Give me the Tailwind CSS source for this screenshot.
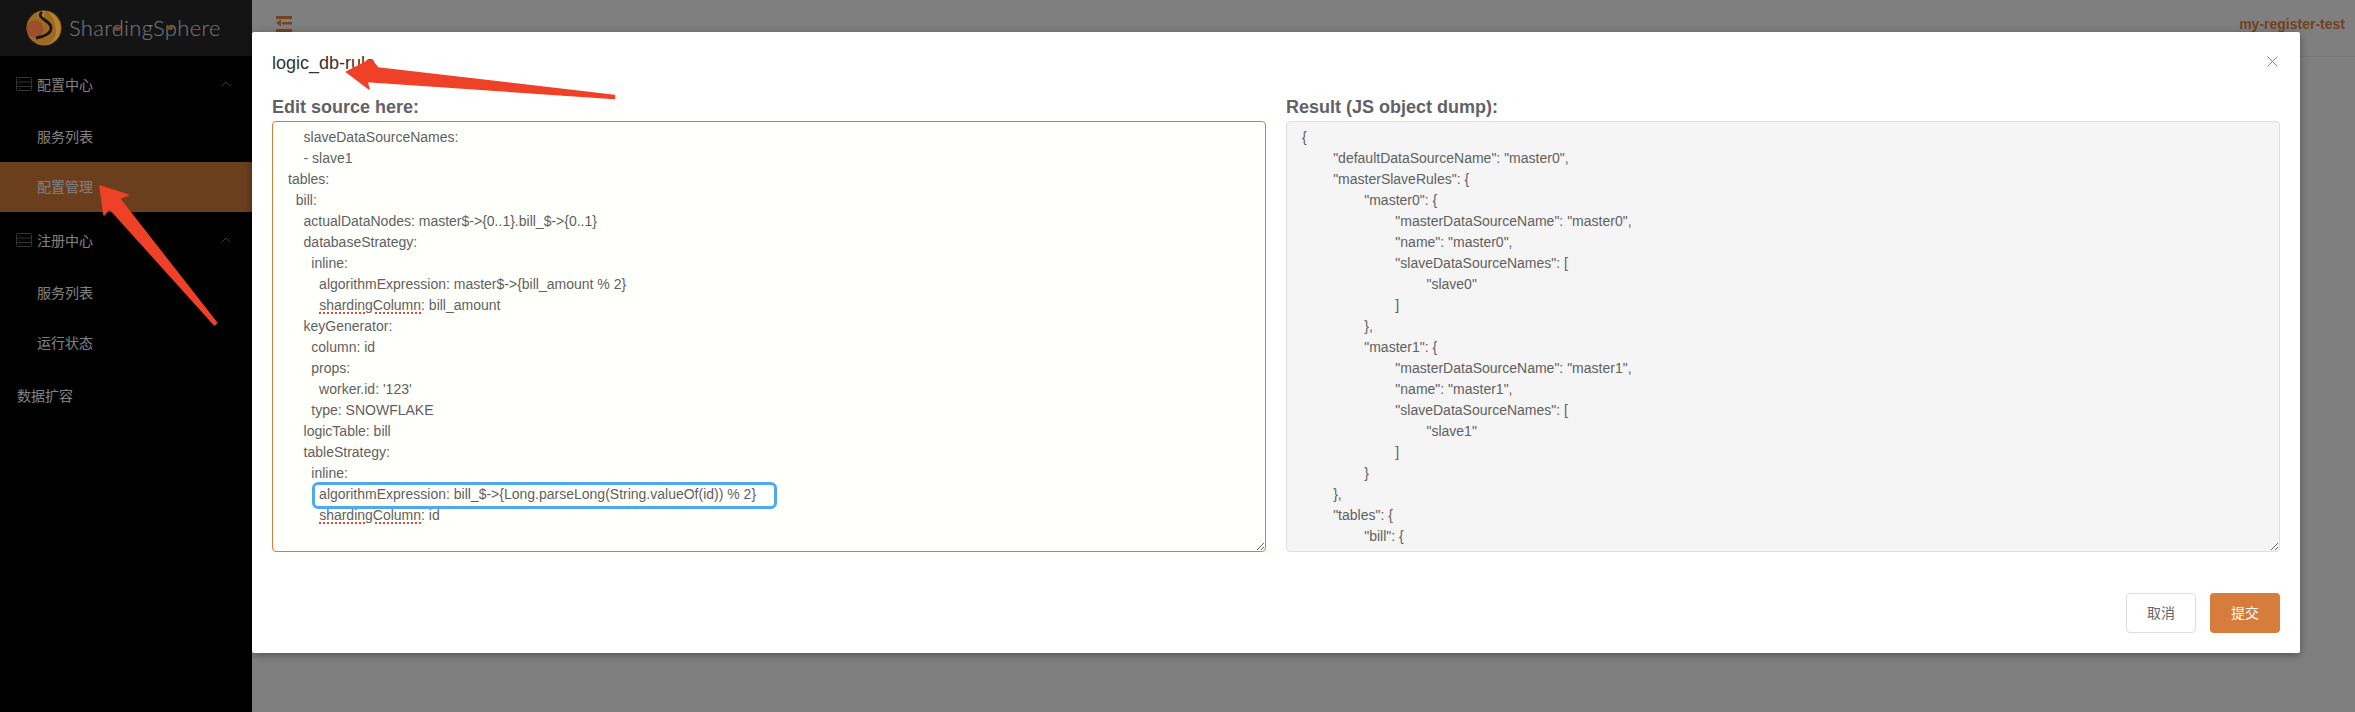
<!DOCTYPE html>
<html lang="en">
<head>
  <meta charset="UTF-8" />
  <title>ShardingSphere</title>
  <script src="https://cdn.jsdelivr.net/npm/@tailwindcss/browser@4"></script>
</head>
<body class="font-['Liberation_Sans','Noto_Sans_CJK_SC',sans-serif] text-sm">
  <div class="relative w-[2355px] h-[712px] overflow-hidden bg-white flex">
    <!-- sidebar -->
    <aside class="w-[252px] shrink-0 bg-black text-white">
      <div class="h-14 bg-[#282828] flex items-center pl-[26px] gap-[7px]">
        <svg class="relative z-20 w-9 h-9" viewBox="0 0 36 36">
          <circle cx="18" cy="18" r="17.500" fill="#9a6a26"/>
          <path d="M22 1c9 4 13 12 12 20-1 7-7 13-14 14 7-3 11-9 10-16-1-7-4-13-8-18z" fill="#b5842c"/>
          <path d="M14 1C8 6 13 9 20 11c-2-3-3-6-1-10z" fill="#b5842c"/>
          <circle cx="9" cy="19" r="8.500" fill="#9c4f2d"/>
          <path d="M16 2C9 8 24 10 25 17c1 6-7 10-15 11" fill="none" stroke="#1c1408" stroke-width="2.800"/>
        </svg>
        <span class="relative font-['Lato'] font-light text-[22px] tracking-[0.3px] text-[#ececec]">ShardingSphere<span class="absolute left-[44px] top-[15px] w-[8px] h-[4px] rounded-b-full bg-[#e09a3c]"></span><span class="absolute left-[97px] top-[14px] w-[8px] h-[4px] rounded-b-full bg-[#e09a3c]"></span></span>
      </div>
      <nav>
        <div class="h-14 flex items-center pl-4 pr-[21px]">
          <svg class="w-4 h-4 mr-[5px]" viewBox="0 0 16 16" fill="none" stroke="#666"><rect x=".5" y="1.5" width="15" height="13" rx="1"/><path d="M.5 6h15M.5 10.500h15M3 3.800h1M3 8.300h1M3 12.600h1"/></svg>
          <span class="flex-1 pt-0.5">配置中心</span>
          <svg class="w-[10px] h-[6px]" viewBox="0 0 10 6" fill="none" stroke="#777"><path d="M.5 5.500 5 1l4.500 4.500"/></svg>
        </div>
        <div class="h-[50px] flex items-center pl-[37px]">服务列表</div>
        <div class="h-[50px] flex items-center pl-[37px] bg-[#d67c3d]">配置管理</div>
        <div class="h-14 flex items-center pl-4 pr-[21px]">
          <svg class="w-4 h-4 mr-[5px]" viewBox="0 0 16 16" fill="none" stroke="#666"><rect x=".5" y="1.5" width="15" height="13" rx="1"/><path d="M.5 6h15M.5 10.500h15M3 3.800h1M3 8.300h1M3 12.600h1"/></svg>
          <span class="flex-1 pt-0.5">注册中心</span>
          <svg class="w-[10px] h-[6px]" viewBox="0 0 10 6" fill="none" stroke="#777"><path d="M.5 5.500 5 1l4.500 4.500"/></svg>
        </div>
        <div class="h-[50px] flex items-center pl-[37px]">服务列表</div>
        <div class="h-[50px] flex items-center pl-[37px]">运行状态</div>
        <div class="h-14 flex items-center pl-[17px]">数据扩容</div>
      </nav>
    </aside>

    <!-- page header behind the dialog -->
    <main class="flex-1">
      <header class="h-[57px] border-b border-[#eee] flex items-center justify-between pl-6 pr-[10px]">
        <svg class="w-4 h-4 -mt-[8px] text-[#e8843f]" viewBox="0 0 16 16" fill="currentColor"><path d="M0 0h16v3H0zM6 6h10v2.500H6zM0 13h16v3H0zM5 3.500v7L0 7z"/></svg>
        <span class="font-bold text-[#e8843f] -mt-[9px]">my-register-test</span>
      </header>
    </main>

    <div class="absolute inset-0 bg-black/50"></div>

    <!-- dialog -->
    <div class="absolute left-[252px] top-8 w-[2048px] bg-white rounded-[2px] shadow-[0_2px_8px_rgba(0,0,0,0.35)] px-5 pt-5 pb-5">
      <div class="flex items-center justify-between h-[22px]">
        <h2 class="text-lg text-[#333] leading-[22px]">logic_db-rule</h2>
        <svg class="w-[11px] h-[11px] -mt-1 mr-[2px]" viewBox="0 0 11 11" stroke="#888" fill="none"><path d="M.5.500l10 10M10.500.500l-10 10"/></svg>
      </div>
      <div class="grid grid-cols-2 gap-5 mt-[22px]">
        <div>
          <h3 class="text-lg font-bold text-[#606266] leading-[23px] pb-[2px]">Edit source here:</h3>
          <div class="relative h-[431px] border border-[#d67c3d] rounded bg-[#fffffb] overflow-hidden resize">
<pre class="font-['Liberation_Sans',sans-serif] text-sm leading-[21px] text-[#5f5f5f] pt-[5px] pl-[15px] whitespace-pre">    slaveDataSourceNames:
    - slave1
tables:
  bill:
    actualDataNodes: master$-&gt;{0..1}.bill_$-&gt;{0..1}
    databaseStrategy:
      inline:
        algorithmExpression: master$-&gt;{bill_amount % 2}
        <span class="underline decoration-dotted decoration-2 decoration-[#e5483a] underline-offset-2">shardingColumn</span>: bill_amount
    keyGenerator:
      column: id
      props:
        worker.id: '123'
      type: SNOWFLAKE
    logicTable: bill
    tableStrategy:
      inline:
        algorithmExpression: bill_$-&gt;{Long.parseLong(String.valueOf(id)) % 2}
        <span class="underline decoration-dotted decoration-2 decoration-[#e5483a] underline-offset-2">shardingColumn</span>: id</pre>
          </div>
        </div>
        <div>
          <h3 class="text-lg font-bold text-[#606266] leading-[23px] pb-[2px]">Result (JS object dump):</h3>
          <div class="h-[431px] border border-[#dcdee2] rounded bg-[#f5f5f5] overflow-hidden resize">
<pre class="font-['Liberation_Sans',sans-serif] text-sm leading-[21px] text-[#5f5f5f] [tab-size:8] pt-[5px] pl-[15px] whitespace-pre">{
	"defaultDataSourceName": "master0",
	"masterSlaveRules": {
		"master0": {
			"masterDataSourceName": "master0",
			"name": "master0",
			"slaveDataSourceNames": [
				"slave0"
			]
		},
		"master1": {
			"masterDataSourceName": "master1",
			"name": "master1",
			"slaveDataSourceNames": [
				"slave1"
			]
		}
	},
	"tables": {
		"bill": {
			"actualDataNodes": "master$-&gt;{0..1}.bill_$-&gt;{0..1}"</pre>
          </div>
        </div>
      </div>
      <div class="flex justify-end gap-[14px] mt-[41px]">
        <button class="w-[70px] h-10 border border-[#dcdee2] rounded text-[#666] bg-white">取消</button>
        <button class="w-[70px] h-10 rounded text-white bg-[#d67c3d]">提交</button>
      </div>
    </div>

    <!-- annotation: blue box and arrows -->
    <div class="absolute left-[312px] top-[482px] w-[465px] h-[27px] border-[3px] border-[#4ea9ee] rounded-[6px]"></div>
    <svg class="absolute inset-0 w-full h-full pointer-events-none" viewBox="0 0 2355 712">
      <g fill="#ef4128" stroke="#ef4128" stroke-linejoin="round">
        <path d="M100 186 128 195 119.500 198.500 216.800 323 214.500 325 109.500 208.500 104 215z" stroke-width="1.500"/>
        <path d="M346.500 72 371 59.500 378 68 614.500 95.500 614.500 98.500 367 81.500 369 89z" stroke-width="1.500"/>
      </g>
    </svg>
  </div>
</body>
</html>
